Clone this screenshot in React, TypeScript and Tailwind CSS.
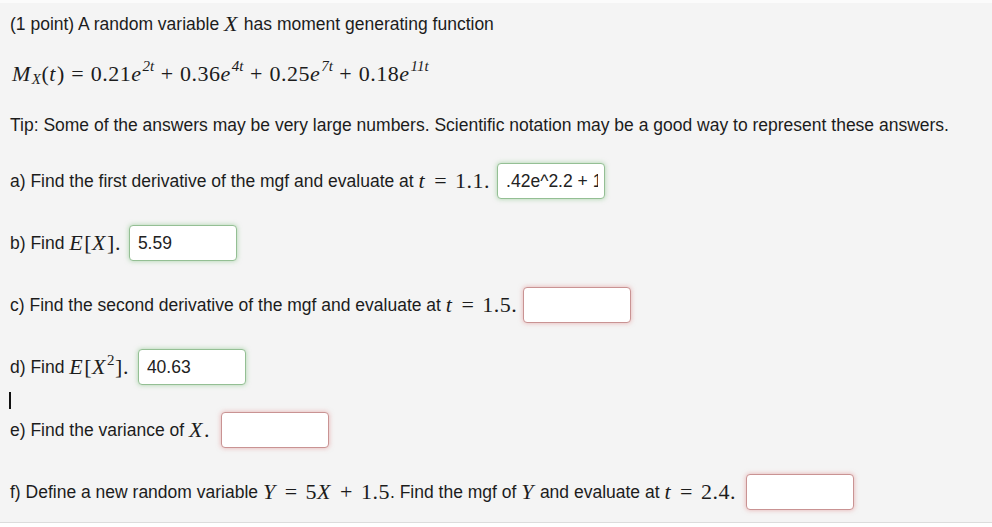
import React from "react";

const M = ({ children }: { children: React.ReactNode }) => (
  <span className="text-[22px] leading-none whitespace-nowrap tracking-[0.5px]" style={{ fontFamily: '"Liberation Serif", "DejaVu Serif", serif' }}>
    {children}
  </span>
);
const V = ({ children }: { children: React.ReactNode }) => <i className="italic pr-[1px]">{children}</i>;
const Op = ({ children }: { children: React.ReactNode }) => <span className="mx-[8px]">{children}</span>;
const Op2 = ({ children }: { children: React.ReactNode }) => <span className="mx-[6.5px]">{children}</span>;
const Sup = ({ children }: { children: React.ReactNode }) => (
  <sup className="text-[15px] relative top-[-4px] align-top italic leading-none tracking-normal">{children}</sup>
);

const Box = ({ value, ok }: { value?: string; ok?: boolean }) => (
  <input
    readOnly
    value={value ?? ""}
    className={
      "w-[108px] h-[36px] bg-white rounded-[4px] border pl-[8px] pr-[6px] text-[17.5px] text-[#222] outline-none " +
      (ok
        ? "border-[#94bf94] shadow-[0_0_5px_rgba(120,190,120,0.6)]"
        : "border-[#c99393] shadow-[0_0_5px_rgba(220,120,120,0.55)]")
    }
    style={{ fontFamily: '"Liberation Sans", Arial, sans-serif' }}
  />
);

export default function App() {
  return (
    <div
      className="w-[992px] h-[527px] bg-white text-[17.5px] text-[#1c1c1c]"
      style={{ fontFamily: '"Liberation Sans", Arial, sans-serif' }}
    >
      <div className="h-[523px] bg-[#f4f4f4] border-t-[3px] border-[#fbfbfb] border-b border-b-[#dcdcdc] pl-[10px] pt-[11px] relative">
        <div className="h-5 flex items-center whitespace-nowrap">
          (1 point) A random variable&nbsp;<M><V>X</V></M>&nbsp;has moment generating function
        </div>
        <div className="h-6 mt-[28px] flex items-center pl-[2px]">
          <M>
            <V>M</V>
            <sub className="text-[15px] italic relative top-[3px]">X</sub>
            (<V>t</V>)<Op2>=</Op2>0.21<V>e</V>
            <Sup>2t</Sup>
            <Op2>+</Op2>0.36<V>e</V>
            <Sup>4t</Sup>
            <Op2>+</Op2>0.25<V>e</V>
            <Sup>7t</Sup>
            <Op2>+</Op2>0.18<V>e</V>
            <Sup>11t</Sup>
          </M>
        </div>
        <div className="h-5 mt-[29px] flex items-center whitespace-nowrap">
          Tip: Some of the answers may be very large numbers. Scientific notation may be a good way to represent these answers.
        </div>
        <div className="h-[36px] mt-[28px] flex items-center whitespace-nowrap">
          a) Find the first derivative of the mgf and evaluate at&nbsp;
          <M>
            <V>t</V>
            <Op>=</Op>1.1.
          </M>
          <span className="ml-[7px]">
            <Box ok value=".42e^2.2 + 1.44e^4.4 + 1.75e^7.7 + 1.98e^12.1" />
          </span>
        </div>
        <div className="h-[36px] mt-[26px] flex items-center whitespace-nowrap">
          b) Find&nbsp;
          <M>
            <V>E</V>[<V>X</V>].
          </M>
          <span className="ml-[8px]">
            <Box ok value="5.59" />
          </span>
        </div>
        <div className="h-[36px] mt-[26px] flex items-center whitespace-nowrap">
          c) Find the second derivative of the mgf and evaluate at&nbsp;
          <M>
            <V>t</V>
            <Op>=</Op>1.5.
          </M>
          <span className="ml-[6px]">
            <Box />
          </span>
        </div>
        <div className="h-[36px] mt-[26px] flex items-center whitespace-nowrap">
          d) Find&nbsp;
          <M>
            <V>E</V>[<V>X</V>
            <sup className="text-[15px] relative top-[-3px] align-top leading-none">2</sup>].
          </M>
          <span className="ml-[9px]">
            <Box ok value="40.63" />
          </span>
        </div>
        <div className="absolute left-[9px] top-[389px] w-[2px] h-[17px] bg-[#111]" />
        <div className="h-[36px] mt-[27px] flex items-center whitespace-nowrap">
          e) Find the variance of&nbsp;
          <M>
            <V>X</V>.
          </M>
          <span className="ml-[11px]">
            <Box />
          </span>
        </div>
        <div className="h-[36px] mt-[26px] flex items-center whitespace-nowrap">
          f) Define a new random variable&nbsp;
          <M>
            <V>Y</V>
            <Op>=</Op>5<V>X</V>
            <Op>+</Op>1.5
          </M>
          . Find the mgf of&nbsp;
          <M>
            <V>Y</V>
          </M>
          &nbsp;and evaluate at&nbsp;
          <M>
            <V>t</V>
            <Op>=</Op>2.4.
          </M>
          <span className="ml-[10px]">
            <Box />
          </span>
        </div>
      </div>
    </div>
  );
}
